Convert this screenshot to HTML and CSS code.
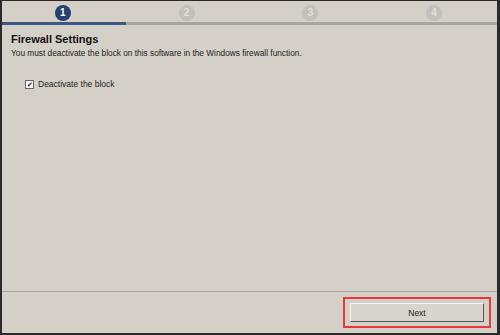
FILE: index.html
```html
<html>
<head>
	<meta charset="UTF-8">
	<title>Firewall Settings</title>
	<link rel="stylesheet" href="styles.css">
</head>
<body>
	<div id="wizard">
		<div id="steps">
			<div class="step active"><span class="dot">1</span></div>
			<div class="step"><span class="dot">2</span></div>
			<div class="step"><span class="dot">3</span></div>
			<div class="step"><span class="dot">4</span></div>
		</div>
		<div id="content">
			<h1>Firewall Settings</h1>
			<p class="desc">You must deactivate the block on this software in the Windows firewall function.</p>
			<label class="check"><span class="box">&#10004;</span>Deactivate the block</label>
		</div>
		<div id="footer">
			<div class="highlight">
				<button class="nextButton">Next</button>
			</div>
		</div>
	</div>
</body>
</html>
```

FILE: styles.css
```css
html, body {
	margin: 0;
	padding: 0;
}
body {
	background-color: #2a2a2a;
	font-family: "Liberation Sans", Arial, sans-serif;
}
#wizard {
	width: 495px;
	height: 332px;
	margin: 1px 3px 2px 2px;
	background-color: #d4d0c8;
	display: flex;
	flex-direction: column;
}
#steps {
	display: flex;
}
.step {
	flex: 1;
	height: 21px;
	display: flex;
	align-items: center;
	justify-content: center;
	border-bottom: 3px solid #a8a6a0;
}
.step.active {
	border-bottom-color: #3d5684;
}
.dot {
	width: 16px;
	height: 16px;
	border-radius: 50%;
	background-color: #c2c0bb;
	color: #e2e0dc;
	font-size: 10px;
	font-weight: bold;
	display: flex;
	align-items: center;
	justify-content: center;
	margin-top: 2px;
	margin-left: -2px;
}
.step.active .dot {
	background-color: #25416e;
	color: white;
}
#content {
	flex: 1;
	padding: 8px 8px 0 9px;
	border-bottom: 1px solid #a8a6a0;
}
h1 {
	font-size: 11px;
	margin: 0;
	color: #111;
}
.desc {
	font-size: 8.3px;
	margin: 3px 0 0 0;
	color: #222;
}
.check {
	display: flex;
	align-items: center;
	font-size: 8.5px;
	color: #222;
	margin: 21px 0 0 14px;
}
.box {
	width: 7px;
	height: 7px;
	border: 1px solid #666;
	background-color: #f4f4f4;
	font-size: 7px;
	line-height: 7px;
	text-align: center;
	margin-right: 4px;
}
#footer {
	height: 41px;
	display: flex;
	justify-content: flex-end;
	align-items: center;
	padding-right: 6px;
}
.highlight {
	border: 2px solid #e8383a;
	padding: 4px 5px 4px 5px;
}
.nextButton {
	width: 134px;
	height: 19px;
	font-family: "Liberation Sans", Arial, sans-serif;
	font-size: 8.5px;
	color: #222;
	background-color: #d8d5ce;
	border: 1px solid;
	border-color: #f4f4f4 #555 #555 #f4f4f4;
	padding: 0;
}
```
